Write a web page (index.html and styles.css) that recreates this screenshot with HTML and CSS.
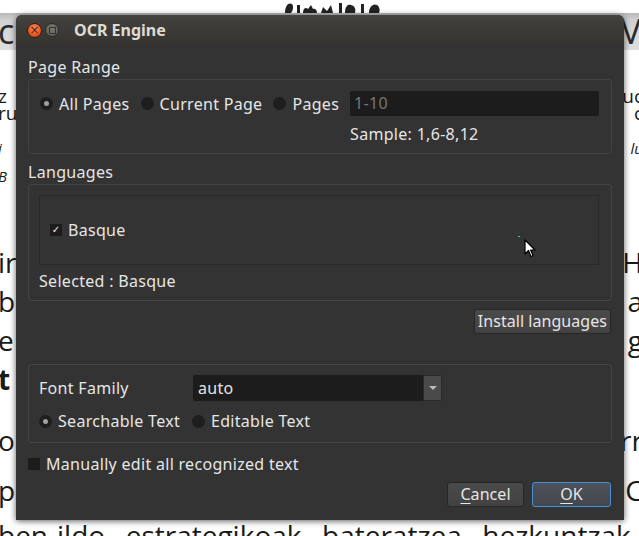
FILE: index.html
```html
<!DOCTYPE html>
<html lang="en">
<head>
  <meta charset="UTF-8">
  <title>OCR Engine</title>
  <link rel="stylesheet" href="styles.css">
</head>
<body>
  <div class="desktop">
    <div class="doc">
      <div class="doc-top">
        <svg class="doc-logo" width="110" height="14" viewBox="0 0 110 14">
          <path d="M4 14 C4 6 8 3 11 5 C13 7 12 12 10 14 Z M16 14 L16 6 L19 6 L19 14 Z M22 14 C22 9 25 8 27 10 L30 6 L32 10 C34 9 36 11 36 14 Z M40 14 L42 8 L46 12 L50 6 L52 14 Z M58 14 L58 4 L61 4 L61 14 Z M64 14 C64 7 67 5 70 6 C74 7 75 10 74 14 Z M80 14 L80 5 L83 5 L83 14 Z M88 14 C88 8 92 4 96 6 C99 8 99 12 98 14 Z" fill="#222"/>
        </svg>
      </div>
      <div class="doc-band"><span>c</span><span>V</span></div>
      <div class="doc-block small">
        <p>z zuzendaritza taldeak proiektua adostu du eta ikastetxeko uc</p>
        <p>ru ikastetxeko hezkuntza proiektuaren helburuak r c</p>
      </div>
      <div class="doc-block note">
        <p>i / iturria: Hezkuntza Saila, ikastetxeen antolaketari buruzko lu</p>
        <p>B / Bibliografia eta erreferentziak, plangintzarako .</p>
      </div>
      <div class="doc-block big">
        <p>ir ikastetxeen hezkuntza proiektua H</p>
        <p>bl berrikuntza plana eta ebaluazio a</p>
        <p>e eskola komunitatearen partaide g</p>
        <p class="bold">t Ikastetxeko helburu nagusiak</p>
      </div>
      <div class="doc-block wide">
        <p>o hezkuntza komunitateko lankide rr</p>
        <p>p irakasleen prestakuntza proiektu C</p>
      </div>
      <div class="doc-block last">
        <p>ben-ildo, estrategikoak, bateratzea, hezkuntzak</p>
      </div>
    </div>

    <div class="dialog">
      <div class="titlebar">
        <span class="wbtn close">×</span>
        <span class="wbtn min"><span></span></span>
        <span class="title">OCR Engine</span>
      </div>

      <div class="dialog-body">
        <div class="group-title">Page Range</div>
        <div class="group range">
          <label class="radio checked"><span class="dot"></span>All Pages</label>
          <label class="radio"><span class="dot"></span>Current Page</label>
          <label class="radio"><span class="dot"></span>Pages</label>
          <div class="field placeholder">1-10</div>
          <div class="hint">Sample: 1,6-8,12</div>
        </div>

        <div class="group-title">Languages</div>
        <div class="group langs">
          <div class="lang-list">
            <label class="check checked"><span class="box">✓</span>Basque</label>
          </div>
          <div class="selected">Selected : Basque</div>
        </div>

        <div class="install-row">
          <button class="btn">Install languages</button>
        </div>

        <div class="group output">
          <div class="font-row">
            <span class="font-label">Font Family</span>
            <div class="combo">
              <span class="combo-value">auto</span>
              <span class="combo-arrow"></span>
            </div>
          </div>
          <div class="radio-row">
            <label class="radio checked"><span class="dot"></span>Searchable Text</label>
            <label class="radio"><span class="dot"></span>Editable Text</label>
          </div>
        </div>

        <label class="check manual"><span class="box"></span>Manually edit all recognized text</label>

        <div class="actions">
          <button class="btn cancel"><u>C</u>ancel</button>
          <button class="btn ok"><u>O</u>K</button>
        </div>
      </div>
    </div>

    <svg class="cursor" width="12" height="20" viewBox="0 0 12 20">
      <path d="M1 1 L1 15 L4.5 11.5 L7 17.5 L9 16.6 L6.6 11 L11 11 Z" fill="#fff" stroke="#000" stroke-width="1.2" stroke-linejoin="round"/>
    </svg>
    <span class="cursor-dot"></span>
  </div>
</body>
</html>
```

FILE: styles.css
```css
:root {
  --win-bg: #333333;
  --text: #e6e6e6;
  --frame: #434343;
  --field-bg: #1c1c1c;
  --btn-border: #262626;
  --accent: #4a90d9;
}

body {
  margin: 0;
  overflow: hidden;
}

.desktop {
  position: relative;
  width: 639px;
  height: 536px;
  overflow: hidden;
  background: #fff;
}

/* document behind the dialog */
.doc {
  font-family: "Open Sans", "Noto Sans", sans-serif;
  color: #1a1a1a;
  margin-left: -2px;
  width: 645px;
}

.doc p {
  margin: 0;
  text-align: justify;
  text-align-last: justify;
  overflow: hidden;
}

.doc-top {
  height: 13px;
  display: flex;
  justify-content: center;
  align-items: flex-end;
  padding-left: 30px;
}

.doc-band {
  height: 37px;
  background: linear-gradient(#b8b8b8, #d2d2d2 20%, #dedede);
  display: flex;
  justify-content: space-between;
  align-items: center;
  font-size: 34px;
  line-height: 37px;
  color: #2a2a2a;
  padding-right: 2px;
}

.doc-block.small {
  margin-top: 38px;
  font-size: 19px;
  line-height: 17px;
}

.doc-block.note {
  margin-top: 12px;
  font-size: 15px;
  line-height: 28px;
  font-style: italic;
}

.doc-block.big {
  margin-top: 53px;
  font-size: 28px;
  line-height: 39px;
}

.doc-block.big p.bold {
  font-weight: bold;
  text-align-last: left;
}

.doc-block.wide {
  margin-top: 16px;
  font-size: 28px;
  line-height: 50px;
}

.doc-block.last {
  margin-top: -2px;
  font-size: 28px;
  line-height: 44px;
}

.doc-block.last p {
  text-align-last: left;
  word-spacing: 6px;
}

/* dialog window */
.dialog {
  position: absolute;
  left: 16px;
  top: 15px;
  width: 608px;
  height: 505px;
  background: var(--win-bg);
  border-radius: 6px 6px 0 0;
  box-shadow: 0 1px 6px rgba(0, 0, 0, 0.65);
  font-family: "Noto Sans", sans-serif;
  font-size: 16px;
  letter-spacing: 0.3px;
  color: var(--text);
  display: flex;
  flex-direction: column;
}

.titlebar {
  height: 30px;
  flex: none;
  display: flex;
  align-items: center;
  padding-left: 11px;
  background: linear-gradient(#44433e, #3a3935 60%, #34332f);
  border-radius: 6px 6px 0 0;
}

.wbtn {
  width: 15px;
  height: 15px;
  border-radius: 50%;
  display: flex;
  align-items: center;
  justify-content: center;
  box-sizing: border-box;
  letter-spacing: 0;
}

.wbtn.close {
  background: radial-gradient(circle at 50% 35%, #f58b5e, #e0501d 70%, #c2410f);
  color: #5a1d07;
  font-size: 12px;
  line-height: 1;
  font-family: "DejaVu Sans", sans-serif;
  border: 1px solid #3a1a0c;
}

.wbtn.min {
  margin-left: 3px;
  width: 14px;
  height: 14px;
  background: radial-gradient(circle at 50% 35%, #79776f, #5c5a54);
  border: 1px solid #2c2b28;
}

.wbtn.min span {
  width: 5px;
  height: 5px;
  border: 1px solid #34332f;
}

.title {
  margin-left: 15px;
  font-weight: bold;
  font-size: 16px;
  letter-spacing: 0;
  color: #dfdbd2;
}

.dialog-body {
  flex: 1;
  padding: 12px;
  display: flex;
  flex-direction: column;
}

.group-title {
  line-height: 20px;
  margin-bottom: 2px;
}

.group {
  border: 1px solid var(--frame);
  border-radius: 3px;
}

.range {
  display: grid;
  grid-template-columns: auto auto auto 1fr;
  column-gap: 11px;
  row-gap: 9px;
  align-items: center;
  padding: 11px 12px 10px 11px;
}

.radio {
  display: flex;
  align-items: center;
  gap: 6px;
  line-height: 18px;
  white-space: nowrap;
}

.radio .dot {
  width: 13px;
  height: 13px;
  border-radius: 50%;
  background: #1e1e1e;
  display: flex;
  align-items: center;
  justify-content: center;
}

.radio.checked .dot::after {
  content: "";
  width: 5px;
  height: 5px;
  border-radius: 50%;
  background: #a0a0a0;
}

.field {
  height: 25px;
  background: var(--field-bg);
  border-radius: 2px;
  padding: 0 4px;
  line-height: 25px;
  box-sizing: border-box;
}

.field.placeholder {
  color: #777;
}

.hint {
  grid-column: 4;
  line-height: 18px;
}

.range + .group-title {
  margin-top: 8px;
}

.langs {
  padding: 10px 12px 10px 10px;
}

.lang-list {
  height: 70px;
  border: 1px solid #292929;
  box-sizing: border-box;
  display: flex;
  align-items: center;
  padding-left: 10px;
}

.check {
  display: flex;
  align-items: center;
  gap: 6px;
  line-height: 18px;
}

.check .box {
  width: 12px;
  height: 12px;
  background: #1c1c1c;
  display: flex;
  align-items: center;
  justify-content: center;
  font-size: 10px;
  font-weight: bold;
  letter-spacing: 0;
  color: #f2f2f2;
  font-family: "DejaVu Sans", sans-serif;
}

.selected {
  margin-top: 7px;
  line-height: 18px;
}

.install-row {
  margin-top: 8px;
  display: flex;
  justify-content: flex-end;
  padding-right: 1px;
}

.btn {
  height: 25px;
  font-family: inherit;
  font-size: 16px;
  letter-spacing: 0.05px;
  color: var(--text);
  background: linear-gradient(#4a4a4a, #424242);
  border: 1px solid var(--btn-border);
  border-radius: 3px;
  padding: 0 3px;
  line-height: 23px;
}

.btn u {
  text-underline-offset: 3px;
}

.output {
  margin-top: 30px;
  padding: 10px 12px 12px 10px;
}

.font-row {
  display: flex;
  align-items: center;
}

.font-label {
  width: 154px;
  line-height: 18px;
}

.combo {
  width: 249px;
  height: 26px;
  display: flex;
  border-radius: 2px;
  overflow: hidden;
}

.combo-value {
  flex: 1;
  background: var(--field-bg);
  line-height: 26px;
  padding-left: 5px;
}

.combo-arrow {
  width: 19px;
  background: #4a4a4a;
  border: 1px solid #2a2a2a;
  border-radius: 0 2px 2px 0;
  box-sizing: border-box;
  display: flex;
  align-items: center;
  justify-content: center;
}

.combo-arrow::after {
  content: "";
  border-left: 4px solid transparent;
  border-right: 4px solid transparent;
  border-top: 4px solid #bbb;
}

.radio-row {
  margin-top: 11px;
  display: flex;
  gap: 12px;
}

.check.manual {
  margin-top: 12px;
}

.actions {
  margin-top: 9px;
  display: flex;
  justify-content: flex-end;
  gap: 8px;
  padding-right: 1px;
}

.btn.cancel {
  width: 77px;
}

.btn.ok {
  width: 79px;
  background: linear-gradient(#4d5158, #44484e);
  border-color: var(--accent);
}

.cursor {
  position: absolute;
  left: 524px;
  top: 239px;
}

.cursor-dot {
  position: absolute;
  left: 518px;
  top: 236px;
  width: 2px;
  height: 1px;
  background: #3fd0a0;
}
```
